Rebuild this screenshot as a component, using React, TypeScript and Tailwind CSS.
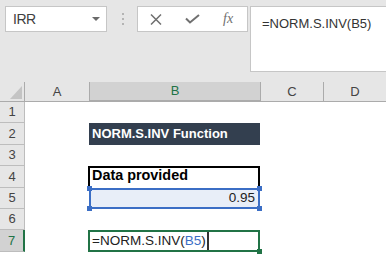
const GREEN = '#217346'
const BLUE = '#3b6ec5'

const rows = [
  { n: 1, h: 'h-[21px]' },
  { n: 2, h: 'h-[22px]' },
  { n: 3, h: 'h-[21px]' },
  { n: 4, h: 'h-[22px]' },
  { n: 5, h: 'h-[21px]' },
  { n: 6, h: 'h-[21px]' },
  { n: 7, h: 'h-[22px]' },
]

function FormulaBar() {
  return (
    <div className="h-[82px] bg-[#e6e6e6] flex items-start pt-[6px] pl-[5px]">
      <div className="w-[102px] h-[26px] bg-white border border-[#c6c6c6] flex items-center justify-between pl-[7px] pr-[6px]">
        <span className="text-[14px] tracking-[-0.5px] text-[#404040]">IRR</span>
        <svg width="8" height="4" viewBox="0 0 8 4">
          <polygon points="0,0 8,0 4,4" fill="#6a6a6a" />
        </svg>
      </div>

      <div className="w-[30px] h-[26px] flex flex-col items-center justify-center gap-[3px] pl-[1px]">
        <span className="w-[2px] h-[2px] bg-[#b4b4b4]" />
        <span className="w-[2px] h-[2px] bg-[#b4b4b4]" />
        <span className="w-[2px] h-[2px] bg-[#b4b4b4]" />
      </div>

      <div className="w-[111px] h-[26px] bg-white border border-[#c6c6c6] flex items-center">
        <svg className="ml-[12px]" width="12" height="11" viewBox="0 0 12 11">
          <path d="M1 0.5 L11 10.5 M11 0.5 L1 10.5" stroke="#707070" strokeWidth="1.5" fill="none" />
        </svg>
        <svg className="ml-[23px]" width="15" height="10" viewBox="0 0 15 10">
          <path d="M1 4.5 L5 8.5 L14 1" stroke="#707070" strokeWidth="2" fill="none" />
        </svg>
        <span className="ml-[23px] text-[14px] italic text-[#707070] font-['Liberation_Serif',serif] leading-none">
          fx
        </span>
      </div>

      <div className="ml-[2px] flex-1 h-[66px] bg-white border border-[#c6c6c6] border-r-0 pl-[11px] pt-[4px]">
        <span className="text-[13px] leading-[20px] text-[#333]">=NORM.S.INV(B5)</span>
      </div>
    </div>
  )
}

function ColumnHeader() {
  return (
    <div className="flex h-[20px] bg-[#e6e6e6] border-b border-[#ababab] text-[13px] text-[#444]">
      <div className="w-[25px] shrink-0 border-r border-[#ababab] relative">
        <svg className="absolute left-[10px] top-[4px]" width="12" height="13" viewBox="0 0 12 13">
          <polygon points="12,0 12,13 0,13" fill="#c4c4c4" />
        </svg>
      </div>
      <div className="w-[64px] shrink-0 flex items-center justify-center">A</div>
      <div className="w-[171px] shrink-0 flex items-center justify-center bg-[#d2d2d2] border-b-2 border-[#217346] text-[#217346] -mb-px border-l border-[#ababab]">
        B
      </div>
      <div className="w-[63px] shrink-0 flex items-center justify-center border-l border-[#ababab]">C</div>
      <div className="w-[63px] shrink-0 flex items-center justify-center border-l border-[#ababab]">D</div>
    </div>
  )
}

function Handle({ className }: { className: string }) {
  return <span className={`absolute w-[5px] h-[5px] ${className}`} />
}

function CellB({ n }: { n: number }) {
  if (n === 2)
    return (
      <div className="h-full bg-[#333f4f] flex items-center pl-[3px] text-[13px] font-bold text-white">
        NORM.S.INV Function
      </div>
    )
  if (n === 4)
    return (
      <div className="h-full border-t-2 border-x-2 border-black -ml-px flex items-end pb-[1px] pl-[2px] text-[14.4px] font-bold text-black">
        Data provided
      </div>
    )
  if (n === 5)
    return (
      <div className="relative h-full">
        <div
          className="h-full bg-[#e8eef8] border-2 flex items-center justify-end pr-[3px] text-[13.5px] text-[#222]"
          style={{ borderColor: BLUE }}
        >
          0.95
        </div>
        <Handle className="bg-[#3b6ec5] -left-[2px] -top-[2px]" />
        <Handle className="bg-[#3b6ec5] -left-[2px] -bottom-[2px]" />
        <Handle className="bg-[#3b6ec5] -right-[2px] -top-[2px]" />
        <Handle className="bg-[#3b6ec5] -right-[2px] -bottom-[2px]" />
      </div>
    )
  if (n === 7)
    return (
      <div className="relative h-full">
        <div
          className="h-full border-2 -ml-px flex items-center pl-[2px] text-[13.5px] text-[#222]"
          style={{ borderColor: GREEN }}
        >
          <span>=NORM.S.INV(</span>
          <span className="text-[#3b6ec5]">B5</span>
          <span>)</span>
          <span className="ml-[1px] w-[2px] self-stretch bg-[#333]" />
        </div>
        <Handle className="bg-[#217346] -right-[2px] -bottom-[2px]" />
      </div>
    )
  return null
}

function Row({ n, h }: { n: number; h: string }) {
  const active = n === 7
  return (
    <div className={`flex ${h}`}>
      <div
        className={`w-[25px] shrink-0 flex items-center justify-center text-[13px] border-b ${
          active
            ? 'bg-[#d2d2d2] text-[#217346] border-r-2 border-r-[#217346] border-b-[#bdbdbd]'
            : 'bg-[#e6e6e6] text-[#444] border-r border-[#bdbdbd]'
        }`}
      >
        {n}
      </div>
      <div className="w-[64px] shrink-0" />
      <div className="w-[171px] shrink-0">
        <CellB n={n} />
      </div>
      <div className="w-[63px] shrink-0" />
      <div className="w-[63px] shrink-0" />
    </div>
  )
}

export default function App() {
  return (
    <div className="w-[386px] h-[254px] overflow-hidden bg-white font-['Liberation_Sans',Arial,sans-serif]">
      <FormulaBar />
      <ColumnHeader />
      {rows.map((r) => (
        <Row key={r.n} n={r.n} h={r.h} />
      ))}
    </div>
  )
}
